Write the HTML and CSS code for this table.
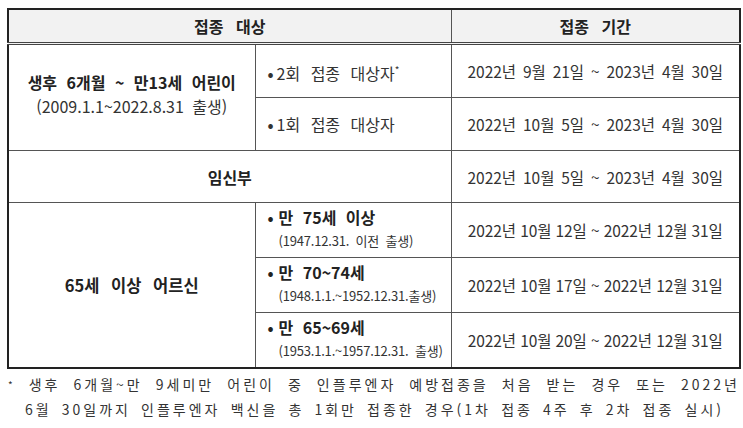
FILE: index.html
```html
<!DOCTYPE html>
<html lang="ko">
<head>
<meta charset="utf-8">
<link rel="stylesheet" href="styles.css">
</head>
<body>
<table class="sched">
  <colgroup>
    <col class="c1"><col class="c2"><col class="c3">
  </colgroup>
  <thead>
    <tr class="head">
      <th colspan="2">접종 대상</th>
      <th>접종 기간</th>
    </tr>
  </thead>
  <tbody>
    <tr class="r1">
      <td rowspan="2" class="group">
        <div class="gt">생후 6개월 ~ 만13세 어린이</div>
        <div class="gs">(2009.1.1~2022.8.31 출생)</div>
      </td>
      <td class="item"><span class="dot">•</span>2회 접종 대상자<sup>*</sup></td>
      <td class="date">2022년 9월 21일 ~ 2023년 4월 30일</td>
    </tr>
    <tr class="r2">
      <td class="item"><span class="dot">•</span>1회 접종 대상자</td>
      <td class="date">2022년 10월 5일 ~ 2023년 4월 30일</td>
    </tr>
    <tr class="r3">
      <td colspan="2" class="group"><div class="gt">임신부</div></td>
      <td class="date">2022년 10월 5일 ~ 2023년 4월 30일</td>
    </tr>
    <tr class="r4">
      <td rowspan="3" class="group"><div class="gt">65세 이상 어르신</div></td>
      <td class="item"><div class="it"><span class="dot">•</span>만 75세 이상</div><div class="is">(1947.12.31. 이전 출생)</div></td>
      <td class="date long">2022년 10월 12일 ~ 2022년 12월 31일</td>
    </tr>
    <tr class="r4">
      <td class="item"><div class="it"><span class="dot">•</span>만 70~74세</div><div class="is">(1948.1.1.~1952.12.31.출생)</div></td>
      <td class="date long">2022년 10월 17일 ~ 2022년 12월 31일</td>
    </tr>
    <tr class="r4">
      <td class="item"><div class="it"><span class="dot">•</span>만 65~69세</div><div class="is">(1953.1.1.~1957.12.31. 출생)</div></td>
      <td class="date long">2022년 10월 20일 ~ 2022년 12월 31일</td>
    </tr>
  </tbody>
</table>
<div class="note">
  <p class="l1"><span class="ast">*</span> 생후 6개월~만 9세미만 어린이 중 인플루엔자 예방접종을 처음 받는 경우 또는 2022년</p>
  <p class="l2">6월 30일까지 인플루엔자 백신을 총 1회만 접종한 경우(1차 접종 4주 후 2차 접종 실시)</p>
</div>
</body>
</html>
```
FILE: styles.css
```css
html, body {
  margin: 0;
  padding: 0;
  background: #fff;
}
body {
  font-family: "Noto Sans CJK KR", "Noto Sans", sans-serif;
  color: #222;
  width: 743px;
  height: 428px;
  overflow: hidden;
}
.sched {
  margin: 8px 0 0 7px;
  width: 732px;
  border-collapse: collapse;
  table-layout: fixed;
  border: 2px solid #222;
}
.c1 { width: 247px; }
.c2 { width: 196px; }
.c3 { width: 289px; }
.sched th, .sched td {
  border: 1px solid #555;
  padding: 0;
  vertical-align: middle;
}
.head th {
  background: #f2f2f2;
  height: 32px;
  font-size: 16px;
  font-weight: 700;
  text-align: center;
  border-bottom: 3px double #444;
  line-height: 20px;
  word-spacing: 8px;
}
.r1 td, .r2 td { height: 52px; }
.r3 td { height: 51px; }
.r4 td { height: 54px; }
.group {
  text-align: center;
  word-spacing: 5px;
}
.r1 .group .gt {
  margin-top: -8px;
}
.r4 .group {
  word-spacing: 7px;
}
.r4 .group .gt {
  font-size: 16.5px;
}
.gt {
  font-size: 16px;
  font-weight: 700;
  line-height: 24px;
}
.gs {
  font-size: 16px;
  line-height: 24px;
  word-spacing: 4px;
  color: #333;
}
.item {
  padding-left: 12px !important;
  font-size: 16px;
  line-height: 20px;
  word-spacing: 6px;
  color: #333;
}
.dot {
  font-weight: 700;
  margin-right: 3px;
}
.it .dot {
  margin-right: 5px;
}
.item sup {
  font-size: 10px;
  vertical-align: 6px;
}
.it {
  font-size: 16px;
  font-weight: 700;
  line-height: 24px;
  color: #222;
  word-spacing: 5px;
  margin-top: -3px;
}
.is {
  font-size: 13px;
  line-height: 24px;
  padding-left: 11px;
  word-spacing: 3px;
  letter-spacing: -0.2px;
}
.date {
  text-align: center;
  font-size: 15.5px;
  line-height: 20px;
  word-spacing: 2.5px;
  color: #333;
}
.date.long {
  word-spacing: 0;
  letter-spacing: -0.1px;
}
.note {
  margin: 3px 3px 0 8px;
  font-size: 14px;
  line-height: 25px;
  color: #333;
  letter-spacing: 3px;
}
.note p {
  margin: 0;
}
.ast {
  font-size: 10px;
  vertical-align: 1px;
}
.l1 {
  text-align: justify;
  text-align-last: justify;
}
.l2 {
  padding-left: 17px;
  margin-right: 16px !important;
  text-align: justify;
  text-align-last: justify;
}
```
